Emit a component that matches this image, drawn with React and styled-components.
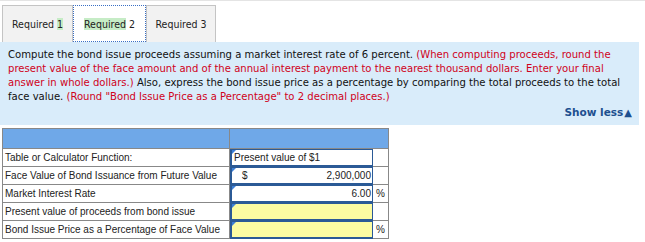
import React from "react";
import styled, { createGlobalStyle } from "styled-components";

const Global = createGlobalStyle`
  body {
    margin: 0;
    background: #fff;
    font-family: "DejaVu Sans Condensed", "DejaVu Sans", Verdana, sans-serif;
  }
`;

const Page = styled.div`
  width: 645px;
  padding-top: 1px;
  border-top: 1px solid #e4e4e4;
`;

const Tabs = styled.div`
  display: flex;
  padding: 3px 0 0 2px;
  height: 37px;
`;

const Tab = styled.div`
  width: ${(p) => p.w}px;
  box-sizing: border-box;
  display: flex;
  align-items: center;
  justify-content: center;
  font-size: 10.5px;
  color: #222;
  background: ${(p) => (p.active ? "#fff" : "#f2f2f2")};
  border: ${(p) => (p.active ? "1px dotted #3a6fc4" : "1px solid #c4c4c4")};
  border-bottom: ${(p) => (p.active ? "1px dotted #3a6fc4" : "none")};
`;

const Mark = styled.span`
  background: #c6ecc6;
`;

const Panel = styled.div`
  width: 639px;
  box-sizing: border-box;
  background: #d9ecfa;
  padding: 6px 12px 5px 8px;
  font-size: 11.2px;
  line-height: 14px;
  color: #111;
`;

const Red = styled.span`
  color: #d0021b;
`;

const ShowLess = styled.div`
  text-align: right;
  margin: 1px -5px 0 0;
  font-family: "DejaVu Sans", Verdana, sans-serif;
  font-size: 10.5px;
  font-weight: bold;
  color: #1d4f8f;
`;

const Arrow = styled.span`
  font-size: 10px;
  margin-left: 1px;
`;

const Table = styled.div`
  margin: 3px 0 0 2px;
  width: 386px;
  display: grid;
  grid-template-columns: 227px 143px 16px;
  font-family: "Liberation Sans", Arial, sans-serif;
  font-size: 10px;
  color: #222;
  border-top: 1px solid #888;
  border-left: 1px solid #888;
`;

const Head = styled.div`
  height: 19px;
  background: #6fa8e8;
  border-right: 1px solid #888;
  border-bottom: 1px solid #888;
  grid-column: ${(p) => p.span || "auto"};
`;

const Label = styled.div`
  height: 17px;
  display: flex;
  align-items: center;
  padding-left: 2px;
  border-right: 1px solid #888;
  border-bottom: 1px solid #888;
`;

const Input = styled.div`
  position: relative;
  height: 18px;
  box-sizing: border-box;
  display: flex;
  align-items: center;
  justify-content: ${(p) => (p.right ? "space-between" : "flex-start")};
  padding: 0 1px 0 2px;
  background: ${(p) => (p.yellow ? "#fcfca2" : "#fff")};
  border: 1px solid #2b5a96;
  border-bottom: 2px solid #2b5a96;
  border-left: 2px solid #2b5a96;
  &::before {
    content: "";
    position: absolute;
    top: 0;
    left: 0;
    border-top: 4px solid #3d7fd6;
    border-right: 4px solid transparent;
  }
`;

const Unit = styled.div`
  height: 17px;
  display: flex;
  align-items: center;
  justify-content: center;
  border-right: 1px solid #888;
  border-bottom: 1px solid #888;
`;

const Dollar = styled.span`
  padding-left: 8px;
`;

const rows = [
  { label: "Table or Calculator Function:", value: "Present value of $1" },
  { label: "Face Value of Bond Issuance from Future Value", dollar: true, value: "2,900,000", right: true },
  { label: "Market Interest Rate", value: "6.00", right: true, unit: "%" },
  { label: "Present value of proceeds from bond issue", yellow: true },
  { label: "Bond Issue Price as a Percentage of Face Value", yellow: true, unit: "%" },
];

export default function App() {
  return (
    <Page>
      <Global />
      <Tabs>
        <Tab w={71}>
          Required&nbsp;<Mark>1</Mark>
        </Tab>
        <Tab w={73} active>
          <Mark>Required</Mark>&nbsp;2
        </Tab>
        <Tab w={70}>Required 3</Tab>
      </Tabs>
      <Panel>
        Compute the bond issue proceeds assuming a market interest rate of 6 percent.{" "}
        <Red>
          (When computing proceeds, round the present value of the face amount and of the annual
          interest payment to the nearest thousand dollars. Enter your final answer in whole
          dollars.)
        </Red>{" "}
        Also, express the bond issue price as a percentage by comparing the total proceeds to the
        total face value. <Red>(Round "Bond Issue Price as a Percentage" to 2 decimal places.)</Red>
        <ShowLess>
          Show less<Arrow>▲</Arrow>
        </ShowLess>
      </Panel>
      <Table>
        <Head />
        <Head span="span 2" />
        {rows.map((r) => (
          <React.Fragment key={r.label}>
            <Label>{r.label}</Label>
            <Input yellow={r.yellow} right={r.right}>
              {r.dollar && <Dollar>$</Dollar>}
              {r.right && !r.dollar && <span />}
              {r.value && <span>{r.value}</span>}
            </Input>
            <Unit>{r.unit}</Unit>
          </React.Fragment>
        ))}
      </Table>
    </Page>
  );
}
